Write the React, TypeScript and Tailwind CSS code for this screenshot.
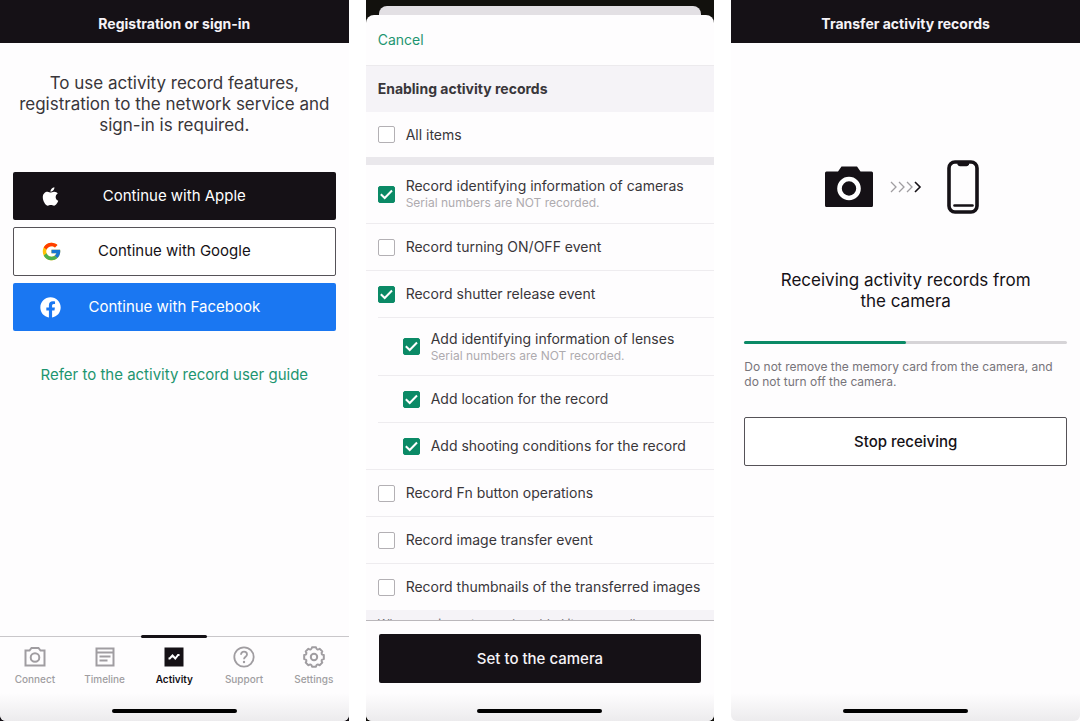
import React, { useState } from "react";
import { FaApple, FaFacebook } from "react-icons/fa";
import { FcGoogle } from "react-icons/fc";

interface RecordItem {
  id: string;
  label: string;
  note?: string;
  nested?: boolean;
}

interface TabItem {
  label: string;
  icon: React.ReactNode;
}

const recordItems: RecordItem[] = [
  {
    id: "cameras",
    label: "Record identifying information of cameras",
    note: "Serial numbers are NOT recorded.",
  },
  { id: "power", label: "Record turning ON/OFF event" },
  { id: "shutter", label: "Record shutter release event" },
  {
    id: "lenses",
    label: "Add identifying information of lenses",
    note: "Serial numbers are NOT recorded.",
    nested: true,
  },
  { id: "location", label: "Add location for the record", nested: true },
  {
    id: "conditions",
    label: "Add shooting conditions for the record",
    nested: true,
  },
  { id: "fn", label: "Record Fn button operations" },
  { id: "transfer", label: "Record image transfer event" },
  { id: "thumbnails", label: "Record thumbnails of the transferred images" },
];

// outline of the settings gear: eight flat teeth with rounded valleys
const gearPath = () => {
  const point = (deg: number, r: number) => {
    const a = (deg * Math.PI) / 180;
    return `${(12 + r * Math.cos(a)).toFixed(2)} ${(12 + r * Math.sin(a)).toFixed(2)}`;
  };
  let d = `M${point(-11, 10)}`;
  for (let deg = 0; deg < 360; deg += 45) {
    d += `L${point(deg + 11, 10)}Q${point(deg + 22.5, 6.8)} ${point(deg + 34, 10)}`;
  }
  return d + "Z";
};

const strokeProps = {
  viewBox: "0 0 24 24",
  className: "size-6",
  fill: "none",
  stroke: "currentColor",
  strokeWidth: 2,
  "aria-hidden": true,
};

const tabs: TabItem[] = [
  {
    label: "Connect",
    icon: (
      <svg {...strokeProps}>
        <path d="M2.500 5.500h4l2-2.500h7l2 2.500h4v15h-19z" />
        <circle cx="12" cy="12.500" r="4.300" />
      </svg>
    ),
  },
  {
    label: "Timeline",
    icon: (
      <svg {...strokeProps}>
        <path d="M3.500 3.500h17v17h-17zM3.500 7.500h17M6.500 11.500h11M6.500 15.500h8" />
      </svg>
    ),
  },
  {
    label: "Activity",
    icon: (
      <svg {...strokeProps}>
        <path d="M2.500 2.500h19v19h-19z" fill="currentColor" stroke="none" />
        <path d="M6.500 13.500h1.200l2.800-3 2.800 3 2.800-3.500h1.400" stroke="white" />
      </svg>
    ),
  },
  {
    label: "Support",
    icon: (
      <svg {...strokeProps}>
        <circle cx="12" cy="12" r="9.700" strokeWidth="1.800" />
        <path
          d="M9 9.700c0-1.900 1.300-3 3-3s3 1.100 3 2.800c0 2.200-3 2.400-3 4.800"
          strokeWidth="1.800"
        />
        <circle cx="12" cy="17" r="1.200" fill="currentColor" stroke="none" />
      </svg>
    ),
  },
  {
    label: "Settings",
    icon: (
      <svg {...strokeProps} strokeLinejoin="round">
        <path d={gearPath()} />
        <circle cx="12" cy="12" r="3.200" />
      </svg>
    ),
  },
];

const HomeIndicator: React.FC = () => (
  <div className="flex justify-center rounded-b-md bg-linear-to-b from-transparent to-[#ecebed] pt-4 pb-2">
    <div className="h-1 w-[125px] rounded-full bg-black"></div>
  </div>
);

const ScreenHeader: React.FC<{ title: string }> = ({ title }) => (
  <header className="flex h-[43px] items-center justify-center bg-[#151116] pt-1">
    <h1 className="text-sm font-bold text-[#f5f3f7]">{title}</h1>
  </header>
);

interface CheckboxProps {
  id: string;
  checked: boolean;
  onChange: () => void;
}

const Checkbox: React.FC<CheckboxProps> = ({ id, checked, onChange }) => (
  <span className="grid shrink-0">
    <input
      id={id}
      type="checkbox"
      checked={checked}
      onChange={onChange}
      className="col-start-1 row-start-1 size-[17px] appearance-none rounded-xs border border-[#b3b0b4] bg-white checked:border-[#0b8a66] checked:bg-[#0b8a66]"
    />
    {checked && (
      <svg
        viewBox="0 0 17 17"
        className="pointer-events-none col-start-1 row-start-1 size-[17px] fill-none stroke-white stroke-2"
        aria-hidden
      >
        <path d="M2.800 8.300l3.900 3.700 7.300-7.500" />
      </svg>
    )}
  </span>
);

const SignInScreen: React.FC = () => (
  <section className="bg-[#151116]">
    <div className="flex h-full flex-col rounded-b-md bg-[#fefdfe]">
      <ScreenHeader title="Registration or sign-in" />
      <div className="flex flex-col px-[13px] pt-[30px]">
        <p className="mb-9 text-center text-[17px] leading-[21px] text-[#39363a]">
          To use activity record features, registration to the network service
          and sign-in is required.
        </p>
        <div className="flex flex-col gap-[7px] text-[15px]">
          <button
            type="button"
            className="relative h-12 rounded-xs bg-[#151116] text-white"
          >
            <FaApple className="absolute inset-y-0 left-[27px] my-auto size-[21px]" />
            Continue with Apple
          </button>
          <button
            type="button"
            className="relative h-[49px] rounded-xs border border-[#555257] bg-white text-[#151116]"
          >
            <FcGoogle className="absolute inset-y-0 left-[27px] my-auto size-[21px]" />
            Continue with Google
          </button>
          <button
            type="button"
            className="relative h-12 rounded-xs bg-[#1a77f2] text-white"
          >
            <FaFacebook className="absolute inset-y-0 left-[27px] my-auto size-[21px]" />
            Continue with Facebook
          </button>
        </div>
        <a
          href="#guide"
          className="mt-[33px] text-center text-[15px] text-[#1d9570]"
        >
          Refer to the activity record user guide
        </a>
      </div>
      <nav className="mt-auto grid grid-cols-5 border-t border-[#c9c7ca] pb-1.5">
        {tabs.map((tab) => (
          <a
            key={tab.label}
            href={`#${tab.label.toLowerCase()}`}
            className={
              tab.label === "Activity"
                ? "relative flex flex-col items-center pt-2 text-[10px] font-semibold text-[#151116]"
                : "relative flex flex-col items-center pt-2 text-[10px] font-medium text-[#a09da1]"
            }
          >
            {tab.label === "Activity" && (
              <span className="absolute inset-x-0.5 -top-0.5 h-[3px] rounded-full bg-[#151116]"></span>
            )}
            {tab.icon}
            <span className="mt-[3px]">{tab.label}</span>
          </a>
        ))}
      </nav>
      <HomeIndicator />
    </div>
  </section>
);

const RecordSettingsScreen: React.FC = () => {
  const [selected, setSelected] = useState<string[]>([
    "cameras",
    "shutter",
    "lenses",
    "location",
    "conditions",
  ]);

  const allSelected = selected.length === recordItems.length;

  const toggleItem = (id: string) =>
    setSelected(
      selected.includes(id)
        ? selected.filter((item) => item !== id)
        : [...selected, id]
    );

  const toggleAll = () =>
    setSelected(allSelected ? [] : recordItems.map((item) => item.id));

  return (
    <section className="flex flex-col bg-[#12110d] pt-1.5">
      <div className="mx-[13px] h-[9px] rounded-t-lg bg-[#e3e0e4]"></div>
      <div className="flex grow flex-col rounded-t-lg rounded-b-md bg-[#fefdfe]">
        <div className="flex h-[50px] items-center px-3">
          <button type="button" className="text-sm text-[#1d9570]">
            Cancel
          </button>
        </div>
        <div className="flex h-[47px] items-center border-t border-[#eceaed] bg-[#f5f3f7] px-3">
          <h2 className="text-sm font-bold text-[#39363a]">
            Enabling activity records
          </h2>
        </div>
        <div className="flex h-[53px] items-center gap-[11px] border-b-8 border-[#eae8ec] px-3 text-sm text-[#39363a]">
          <Checkbox id="all" checked={allSelected} onChange={toggleAll} />
          <label htmlFor="all">All items</label>
        </div>
        <ul className="text-sm text-[#39363a]">
          {recordItems.map((item, index) => (
            <li key={item.id} className={item.nested ? "pl-3" : ""}>
              <div
                className={`flex items-center gap-[11px] ${
                  item.nested ? "pl-[25px]" : "pl-3"
                } ${item.note ? "h-[58px]" : "h-[47px]"} ${
                  index > 0 ? "border-t border-[#eeecef]" : ""
                }`}
              >
                <Checkbox
                  id={item.id}
                  checked={selected.includes(item.id)}
                  onChange={() => toggleItem(item.id)}
                />
                <label htmlFor={item.id} className="flex flex-col">
                  <span className="leading-[18px]">{item.label}</span>
                  {item.note && (
                    <span className="text-xs leading-4 text-[#aeabaf]">
                      {item.note}
                    </span>
                  )}
                </label>
              </div>
            </li>
          ))}
        </ul>
        <div className="min-h-2.5 flex-1 basis-0 overflow-hidden bg-[#f5f3f7] px-3 pt-1.5">
          <p className="h-0 text-xs text-[#77747a]">
            When you import records, added items are all
          </p>
        </div>
        <div className="border-t border-[#bab7bb] px-[13px] pt-[13px] pb-[10px]">
          <button
            type="button"
            className="h-[49px] w-full rounded-xs bg-[#151116] pt-0.5 text-[15px] font-medium text-[#f5f3f7]"
          >
            Set to the camera
          </button>
        </div>
        <HomeIndicator />
      </div>
    </section>
  );
};

const TransferScreen: React.FC = () => {
  const progress = 50;

  return (
    <section className="flex flex-col bg-[#fefdfe]">
      <ScreenHeader title="Transfer activity records" />
      <div className="flex flex-col px-[13px] pt-[117px]">
        <div className="flex items-center justify-center pr-2">
          <svg viewBox="0 0 48 42" className="mr-[17px] h-[42px] w-12" aria-hidden>
            <path
              d="M1.500 5.500h11.500l3.500-5h15.500l3.500 5H46.500q1.500 0 1.500 1.500v32.500q0 1.500-1.500 1.500h-45q-1.500 0-1.500-1.500V7q0-1.500 1.500-1.500z"
              fill="#151116"
            />
            <circle
              cx="24"
              cy="22.500"
              r="9.500"
              fill="none"
              stroke="white"
              strokeWidth="4.600"
            />
          </svg>
          <svg
            viewBox="0 0 32 12"
            className="mr-[25px] h-3 w-8 fill-none stroke-[#a09da1] stroke-[1.3]"
            aria-hidden
          >
            <path d="M1 1l5 5-5 5M9 1l5 5-5 5M17 1l5 5-5 5" />
            <path d="M25 1l5 5-5 5" className="stroke-[#151116] stroke-[1.6]" />
          </svg>
          <svg
            viewBox="0 0 32 54"
            className="h-[54px] w-8 fill-none stroke-[#151116]"
            aria-hidden
          >
            <rect x="2" y="2" width="28" height="50" rx="6" strokeWidth="3.600" />
            <path d="M10.500 2h11.500v2.200q-.5 2-2.500 2h-6.500q-2 0-2.500-2z" fill="#151116" stroke="none" />
            <path d="M7.500 45.500h18" strokeWidth="2.600" strokeLinecap="round" />
          </svg>
        </div>
        <p className="mt-14 px-6 text-center text-[17px] leading-[21px] text-[#151116]">
          Receiving activity records from the camera
        </p>
        <div
          role="progressbar"
          aria-valuenow={progress}
          aria-label="Receiving activity records"
          className="mt-[29px] h-[3px] rounded-full bg-[#d6d4d7]"
        >
          <div
            className="h-full rounded-full bg-[#0b8a66]"
            style={{ width: `${progress}%` }}
          ></div>
        </div>
        <p className="mt-[15px] text-xs leading-[15px] text-[#77747a]">
          Do not remove the memory card from the camera, and do not turn off the
          camera.
        </p>
        <button
          type="button"
          className="mt-7 h-[49px] rounded-xs border border-[#555257] bg-white pt-0.5 text-[15px] font-medium text-[#151116]"
        >
          Stop receiving
        </button>
      </div>
      <div className="mt-auto">
        <HomeIndicator />
      </div>
    </section>
  );
};

const App: React.FC = () => (
  <main className="grid min-h-screen grid-cols-3 gap-[17px] bg-white font-['Inter',sans-serif]">
    <SignInScreen />
    <RecordSettingsScreen />
    <TransferScreen />
  </main>
);

export default App;
